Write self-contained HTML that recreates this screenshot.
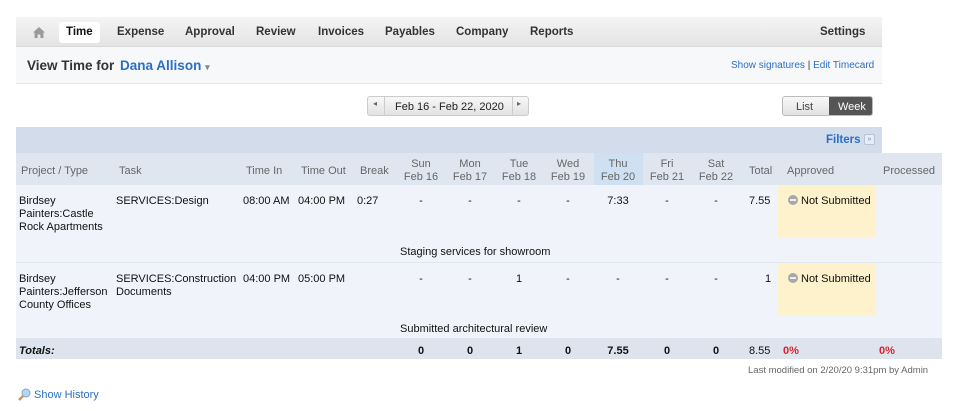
<!DOCTYPE html>
<html><head><style>
*{margin:0;padding:0;box-sizing:border-box}
body{width:954px;height:410px;background:#fff;font-family:"Liberation Sans",Arial,sans-serif;font-size:11px;color:#111;position:relative;overflow:hidden}
.a{position:absolute;white-space:nowrap}
.c{position:absolute;text-align:center;width:50px;line-height:13px}
.nav b{position:absolute;top:26px;font-size:11.5px;color:#333}
.hd{color:#666;font-size:11px}
.ns{position:absolute;width:98px;height:52px;background:#fdf2cc;left:778px}
.dot{display:inline-block;width:10px;height:10px;border-radius:50%;background:#a8a8a8;vertical-align:-1px;margin-right:3px;position:relative}
.dot:after{content:"";position:absolute;left:2px;top:4px;width:6px;height:2px;background:#eee}
.m{position:absolute;left:0;top:1px;width:954px;height:410px}
</style></head><body>
<!-- nav -->
<div class="a" style="left:16px;top:17px;width:866px;height:30px;background:linear-gradient(#f4f4f4,#e4e4e4);border-bottom:1px solid #d8d8d8"></div>
<div class="a" style="left:59px;top:22px;width:41px;height:21px;background:#fff;border-radius:3px"></div>
<svg class="a" style="left:33px;top:27px" width="12" height="11" viewBox="0 0 12 11"><path d="M6 0L0 5.5h1.6V11h3V7.5h2.8V11h3V5.5H12z" fill="#9a9a9a"/></svg>
<div class="nav"><b style="left:66px;color:#111">Time</b><b style="left:117px">Expense</b><b style="left:185px">Approval</b><b style="left:256px">Review</b><b style="left:318px">Invoices</b><b style="left:385px">Payables</b><b style="left:456px">Company</b><b style="left:530px">Reports</b><b style="left:820px">Settings</b></div>
<!-- view header -->
<div class="a" style="left:16px;top:47px;width:866px;height:37px;background:#f7f8fa;border-bottom:1px solid #e6e6e6"></div>
<div class="a" style="left:27px;top:58px;font-size:13.5px;font-weight:bold;color:#333">View Time for <span style="color:#2a6fc4;margin-left:2px">Dana Allison</span> <span style="color:#888;font-size:9px">▾</span></div>
<div class="a" style="left:731px;top:60px;font-size:10px;color:#2a6fc4">Show signatures <span style="color:#333">|</span> Edit Timecard</div>
<!-- date pill -->
<div class="a" style="left:367px;top:96px;width:162px;height:20px;background:linear-gradient(#f8f8f8,#e2e2e2);border:1px solid #ccc;border-radius:3px"></div>
<div class="a" style="left:384px;top:96px;width:1px;height:20px;background:#ccc"></div>
<div class="a" style="left:512px;top:96px;width:1px;height:20px;background:#ccc"></div>
<div class="a" style="left:373px;top:99px;font-size:8px;color:#666">◂</div>
<div class="a" style="left:517px;top:99px;font-size:8px;color:#666">▸</div>
<div class="a" style="left:395px;top:101px;font-size:11px;color:#222">Feb 16 - Feb 22, 2020</div>
<div class="a" style="left:782px;top:96px;width:91px;height:20px;border:1px solid #bbb;border-radius:3px;background:linear-gradient(#f8f8f8,#e2e2e2);overflow:hidden"><div class="a" style="left:46px;top:0;width:46px;height:20px;background:#555"></div></div>
<div class="a" style="left:796px;top:101px;color:#444">List</div>
<div class="a" style="left:838px;top:101px;color:#fff">Week</div>
<!-- filters -->
<div class="a" style="left:16px;top:127px;width:866px;height:26px;background:#d2dcea"></div>
<div class="a" style="left:826px;top:134px;font-weight:bold;color:#2a6fc4;font-size:11.5px">Filters</div>
<div class="a" style="left:864px;top:134px;width:11px;height:11px;border:1px solid #b8c4d4;background:#e8eef6;border-radius:2px;font-size:7px;color:#7a8ab0;text-align:center;line-height:9px">»</div>
<!-- header row -->
<div class="a" style="left:16px;top:153px;width:926px;height:32px;background:#dfe6f0"></div>
<div class="a" style="left:594px;top:153px;width:49px;height:32px;background:#cfe0f2"></div>
<div class="a" style="left:16px;top:185px;width:926px;height:153px;background:#f0f4fa"></div>
<div class="a" style="left:16px;top:262px;width:926px;height:1px;background:#e2e8f0"></div>
<div class="ns" style="top:185px"></div>
<div class="ns" style="top:263px"></div>
<div class="a" style="left:16px;top:338px;width:926px;height:21px;background:#dde4ee"></div>
<div class="m">
<div class="hd">
<div class="a" style="left:21px;top:164px">Project / Type</div>
<div class="a" style="left:119px;top:164px">Task</div>
<div class="a" style="left:246px;top:164px">Time In</div>
<div class="a" style="left:301px;top:164px">Time Out</div>
<div class="a" style="left:360px;top:164px">Break</div>
<div class="c" style="left:396px;top:157px">Sun<br>Feb 16</div>
<div class="c" style="left:445px;top:157px">Mon<br>Feb 17</div>
<div class="c" style="left:494px;top:157px">Tue<br>Feb 18</div>
<div class="c" style="left:543px;top:157px">Wed<br>Feb 19</div>
<div class="c" style="left:593px;top:157px">Thu<br>Feb 20</div>
<div class="c" style="left:642px;top:157px">Fri<br>Feb 21</div>
<div class="c" style="left:691px;top:157px">Sat<br>Feb 22</div>
<div class="a" style="left:749px;top:164px">Total</div>
<div class="a" style="left:787px;top:164px">Approved</div>
<div class="a" style="left:883px;top:164px">Processed</div>
</div>
<div class="a" style="left:19px;top:194px;line-height:13px">Birdsey<br>Painters:Castle<br>Rock Apartments</div>
<div class="a" style="left:116px;top:194px">SERVICES:Design</div>
<div class="a" style="left:243px;top:194px">08:00 AM</div>
<div class="a" style="left:298px;top:194px">04:00 PM</div>
<div class="a" style="left:357px;top:194px">0:27</div>
<div class="c" style="left:396px;top:194px">-</div><div class="c" style="left:445px;top:194px">-</div><div class="c" style="left:494px;top:194px">-</div><div class="c" style="left:543px;top:194px">-</div><div class="c" style="left:593px;top:194px">7:33</div><div class="c" style="left:642px;top:194px">-</div><div class="c" style="left:691px;top:194px">-</div>
<div class="a" style="left:749px;top:194px">7.55</div>
<div class="a" style="left:788px;top:194px"><span class="dot"></span>Not Submitted</div>
<div class="a" style="left:400px;top:245px">Staging services for showroom</div>
<div class="a" style="left:19px;top:272px;line-height:13px">Birdsey<br>Painters:Jefferson<br>County Offices</div>
<div class="a" style="left:116px;top:272px;line-height:13px">SERVICES:Construction<br>Documents</div>
<div class="a" style="left:243px;top:272px">04:00 PM</div>
<div class="a" style="left:298px;top:272px">05:00 PM</div>
<div class="c" style="left:396px;top:272px">-</div><div class="c" style="left:445px;top:272px">-</div><div class="c" style="left:494px;top:272px">1</div><div class="c" style="left:543px;top:272px">-</div><div class="c" style="left:593px;top:272px">-</div><div class="c" style="left:642px;top:272px">-</div><div class="c" style="left:691px;top:272px">-</div>
<div class="a" style="left:765px;top:272px">1</div>
<div class="a" style="left:788px;top:272px"><span class="dot"></span>Not Submitted</div>
<div class="a" style="left:400px;top:322px">Submitted architectural review</div>
<div class="a" style="left:19px;top:344px;font-weight:bold;font-style:italic">Totals:</div>
<div style="font-weight:bold">
<div class="c" style="left:396px;top:344px">0</div><div class="c" style="left:445px;top:344px">0</div><div class="c" style="left:494px;top:344px">1</div><div class="c" style="left:543px;top:344px">0</div><div class="c" style="left:593px;top:344px">7.55</div><div class="c" style="left:642px;top:344px">0</div><div class="c" style="left:691px;top:344px">0</div>
</div>
<div class="a" style="left:749px;top:344px">8.55</div>
<div class="a" style="left:783px;top:344px;color:#e0202c;font-weight:bold">0%</div>
<div class="a" style="left:879px;top:344px;color:#e0202c;font-weight:bold">0%</div>
<div class="a" style="left:748px;top:364px;font-size:9.5px;color:#666">Last modified on 2/20/20 9:31pm by Admin</div>
<svg class="a" style="left:18px;top:387px" width="13" height="13" viewBox="0 0 13 13"><circle cx="8" cy="5" r="4" fill="#b8d4ef" stroke="#7fa6cf"/><path d="M5 8L1 12" stroke="#c89a50" stroke-width="2.5"/></svg>
<div class="a" style="left:34px;top:388px;color:#2a6fc4;font-size:11px">Show History</div>
</div>
</body></html>
